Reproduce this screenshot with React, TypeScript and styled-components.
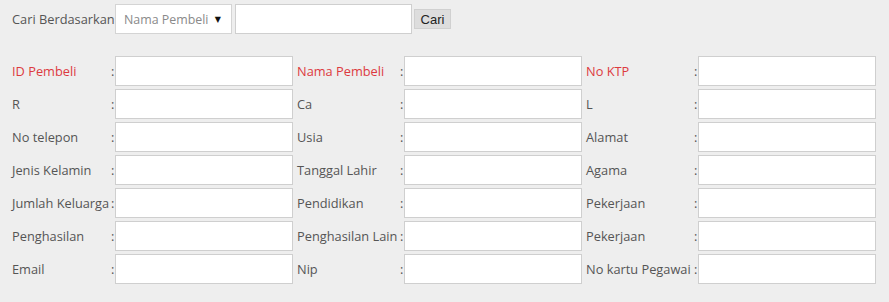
import React from "react";
import styled, { createGlobalStyle } from "styled-components";

const GlobalStyle = createGlobalStyle`
  html, body {
    margin: 0;
    padding: 0;
    background: #eeeeee;
  }
  body {
    font-family: "Open Sans", "Liberation Sans", sans-serif;
    font-size: 12.8px;
    color: #555555;
  }
`;

const Page = styled.div`
  padding: 4px 8px 0 8px;
  width: 889px;
  height: 302px;
  box-sizing: border-box;
`;

const SearchBar = styled.div`
  display: flex;
  align-items: center;
  height: 30px;
  padding-left: 4px;
`;

const SearchLabel = styled.span`
  width: 103px;
`;

const SelectBox = styled.div`
  box-sizing: border-box;
  width: 117px;
  height: 30px;
  background: #fff;
  border: 1px solid #d4d4d4;
  display: flex;
  align-items: center;
  padding: 0 10px 0 8px;
  color: #8a8a8a;
  font-size: 12.4px;
  white-space: nowrap;
`;

const Arrow = styled.span`
  margin-left: auto;
  color: #111;
  font-size: 8px;
  font-family: "DejaVu Sans", sans-serif;
`;

const TextInput = styled.input<{ $w?: number }>`
  box-sizing: border-box;
  width: ${({ $w }) => $w ?? 178}px;
  height: 30px;
  background: #fff;
  border: 1px solid #cfcfcf;
  margin: 0;
  padding: 0 4px;
  font: inherit;
  outline: none;
`;

const SearchInput = styled(TextInput)`
  margin-left: 3px;
`;

const Button = styled.button`
  margin-left: 2px;
  height: 20px;
  width: 37px;
  padding: 0;
  background: #dddddd;
  border: 1px solid #d0d0d0;
  font-family: "Liberation Sans", Arial, sans-serif;
  font-size: 13px;
  color: #222;
`;

const Form = styled.div`
  margin-top: 22px;
  display: grid;
  grid-template-columns: 102px 5px 178px 106px 5px 178px 111px 5px 178px;
  grid-auto-rows: 30px;
  row-gap: 3px;
  align-items: center;
`;

const Label = styled.span<{ $required?: boolean }>`
  padding-left: 4px;
  white-space: nowrap;
  color: ${({ $required }) => ($required ? "#dd3a3f" : "#555555")};
`;

const Colon = styled.span`
  padding-left: 1px;
`;

const fields: [string, boolean][][] = [
  [["ID Pembeli", true], ["Nama Pembeli", true], ["No KTP", true]],
  [["R", false], ["Ca", false], ["L", false]],
  [["No telepon", false], ["Usia", false], ["Alamat", false]],
  [["Jenis Kelamin", false], ["Tanggal Lahir", false], ["Agama", false]],
  [["Jumlah Keluarga", false], ["Pendidikan", false], ["Pekerjaan", false]],
  [["Penghasilan", false], ["Penghasilan Lain", false], ["Pekerjaan", false]],
  [["Email", false], ["Nip", false], ["No kartu Pegawai", false]],
];

export default function App() {
  return (
    <Page>
      <GlobalStyle />
      <SearchBar>
        <SearchLabel>Cari Berdasarkan</SearchLabel>
        <SelectBox>
          <span>Nama Pembeli</span>
          <Arrow>▼</Arrow>
        </SelectBox>
        <SearchInput $w={177} />
        <Button>Cari</Button>
      </SearchBar>
      <Form>
        {fields.flat().map(([name, req], i) => (
          <React.Fragment key={i}>
            <Label $required={req}>{name}</Label>
            <Colon>:</Colon>
            <TextInput />
          </React.Fragment>
        ))}
      </Form>
    </Page>
  );
}
